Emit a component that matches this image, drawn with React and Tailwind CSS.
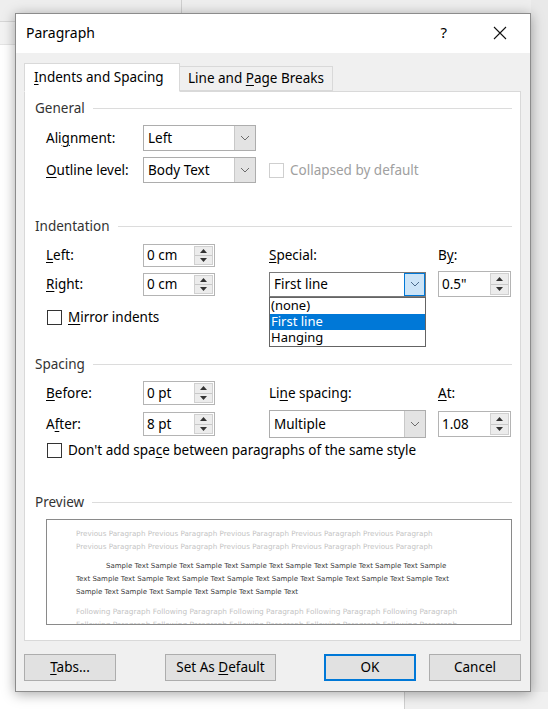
import React from 'react';

const font = { fontFamily: '"Noto Sans", "Open Sans", sans-serif' };

const U = ({ children }) => <span className="underline underline-offset-2 decoration-1">{children}</span>;

const Chevron = ({ color = '#6b6b6b' }) => (
    <svg width="10" height="6" viewBox="0 0 10 6">
        <polyline points="1,1 5,5 9,1" fill="none" stroke={color} strokeWidth="1" />
    </svg>
);

const Heading = ({ children }) => (
    <div className="flex items-center h-[18px] text-[13.5px] text-[#333]">
        <span>{children}</span>
        <div className="flex-1 h-px bg-[#dcdcdc] ml-2 mr-[8px]" />
    </div>
);

const Select = ({ value, width = 'w-[113px]', height = 'h-[26px]', active = false }) => (
    <div className={`flex ${width} ${height} bg-white border ${active ? 'border-[#7a7a7a]' : 'border-[#adadad]'}`}>
        <div className="flex-1 flex items-center pl-[4px] text-black">{value}</div>
        {active ? (
            <div className="w-[21px] flex items-center justify-center bg-[#cce4f7] border border-[#0078d7]">
                <Chevron color="#4a6a8a" />
            </div>
        ) : (
            <div className="w-[21px] flex items-center justify-center bg-[#e3e3e3] border-l border-[#c8c8c8]">
                <Chevron />
            </div>
        )}
    </div>
);

const Spinner = ({ value, width = 'w-[72px]', height = 'h-[24px]' }) => (
    <div className={`flex ${width} ${height} bg-white border border-[#b4b4b4]`}>
        <div className="flex-1 flex items-center pl-[3px] text-black">{value}</div>
        <div className="w-[19px] flex flex-col my-[1px] mr-[1px] bg-[#ececec] border border-[#d0d0d0]">
            <div className="flex-1 flex items-center justify-center border-b border-[#c8c8c8]">
                <svg width="7" height="4" viewBox="0 0 7 4"><polygon points="0,4 3.5,0 7,4" fill="#333" /></svg>
            </div>
            <div className="flex-1 flex items-center justify-center">
                <svg width="7" height="4" viewBox="0 0 7 4"><polygon points="0,0 3.5,4 7,0" fill="#333" /></svg>
            </div>
        </div>
    </div>
);

const Checkbox = ({ disabled = false }) => (
    <div className={`w-[15px] h-[15px] bg-white border ${disabled ? 'border-[#cfcfcf]' : 'border-[#333]'}`} />
);

const Button = ({ children, primary = false, width = 'w-[92px]' }) => (
    <div className={`${width} h-[27px] flex items-center justify-center text-[13.5px] text-black bg-[#e1e1e1] ${primary ? 'border-2 border-[#0078d7]' : 'border border-[#adadad]'}`}>
        {children}
    </div>
);

const prev = 'Previous Paragraph Previous Paragraph Previous Paragraph Previous Paragraph Previous Paragraph';
const follow = 'Following Paragraph Following Paragraph Following Paragraph Following Paragraph Following Paragraph';

const App = () => {
    return (
        <div className="relative w-[548px] h-[709px] bg-white overflow-hidden" style={font}>
            {/* background window behind dialog */}
            <div className="absolute left-0 top-0 w-full h-[22px] bg-[#eeeeee] border-b border-[#d6d6d6]" />
            <div className="absolute left-[181px] top-0 w-px h-[22px] bg-[#cfcfcf]" />
            <div className="absolute left-0 top-[22px] w-full h-[23px] bg-[#f3f3f3] border-b border-[#e4e4e4]" />
            <div className="absolute left-[531px] top-0 w-[17px] h-full bg-[#e9e9e9]" />
            <div className="absolute left-[404px] top-[692px] w-[144px] h-[17px] bg-[#f0f0f0] border-l border-[#d0d0d0]" />

            {/* dialog */}
            <div className="relative z-10 ml-[15px] mt-[13px] w-[516px] h-[679px] bg-[#f0f0f0] border border-[#8c8c8c] shadow-[0_2px_12px_rgba(0,0,0,0.35)] flex flex-col">
                {/* title bar */}
                <div className="h-[39px] bg-white flex items-center pl-[10px] pb-[2px] text-black">
                    <span className="text-[14px]">Paragraph</span>
                    <span className="ml-auto text-[15px] mr-[46px]">?</span>
                    <svg width="14" height="14" viewBox="0 0 14 14" className="mr-[23px]">
                        <path d="M1 1 L13 13 M13 1 L1 13" stroke="#111" strokeWidth="1.1" />
                    </svg>
                </div>

                <div className="px-[8px] pt-[10px] flex flex-col">
                    {/* tabs */}
                    <div className="flex items-end h-[28px] text-[13.5px] text-black">
                        <div className="relative z-10 w-[156px] h-[29px] -mb-px bg-white border border-[#d9d9d9] border-b-white flex items-center pl-[9px]">
                            <span><U>I</U>ndents and Spacing</span>
                        </div>
                        <div className="w-[153px] h-[25px] bg-[#f0f0f0] border border-l-0 border-[#d9d9d9] flex items-center pl-[8px]">
                            <span>Line and <U>P</U>age Breaks</span>
                        </div>
                    </div>

                    {/* panel */}
                    <div className="w-[497px] h-[550px] bg-white border border-[#d9d9d9] pl-[10px] pt-[7px] flex flex-col text-[13.5px] text-black">
                        <Heading>General</Heading>
                        <div className="ml-[11px] mt-[8px] flex items-center h-[26px]">
                            <div className="w-[97px]">Ali<U>g</U>nment:</div>
                            <Select value="Left" />
                        </div>
                        <div className="ml-[11px] mt-[6px] flex items-center h-[26px]">
                            <div className="w-[97px]"><U>O</U>utline level:</div>
                            <Select value="Body Text" />
                            <div className="ml-[13px]"><Checkbox disabled /></div>
                            <span className="ml-[6px] text-[#a0a0a0]">Collapsed by default</span>
                        </div>

                        <div className="mt-[34px]"><Heading>Indentation</Heading></div>
                        <div className="ml-[11px] mt-[8px] flex items-center h-[24px]">
                            <div className="w-[97px]"><U>L</U>eft:</div>
                            <Spinner value="0 cm" height="h-[23px]" />
                            <div className="ml-[54px] w-[157px]"><U>S</U>pecial:</div>
                            <div className="ml-[12px]">B<U>y</U>:</div>
                        </div>
                        <div className="ml-[11px] mt-[4px] flex items-center h-[26px]">
                            <div className="w-[97px]"><U>R</U>ight:</div>
                            <Spinner value="0 cm" height="h-[23px]" />
                            <div className="relative ml-[54px]">
                                <Select value="First line" width="w-[157px]" height="h-[25px]" active />
                                <div className="absolute left-0 top-full w-[157px] bg-white border border-[#646464] z-20 flex flex-col text-[13px]">
                                    <div className="h-[16px] leading-[15px] pl-[1px]">(none)</div>
                                    <div className="h-[16px] leading-[15px] pl-[1px] bg-[#0078d7] text-white">First line</div>
                                    <div className="h-[16px] leading-[15px] pl-[1px]">Hanging</div>
                                </div>
                            </div>
                            <div className="ml-[12px]"><Spinner value="0.5&quot;" width="w-[73px]" height="h-[26px]" /></div>
                        </div>
                        <div className="ml-[12px] mt-[11px] flex items-center h-[18px]">
                            <Checkbox />
                            <span className="ml-[6px]"><U>M</U>irror indents</span>
                        </div>

                        <div className="mt-[29px]"><Heading>Spacing</Heading></div>
                        <div className="ml-[11px] mt-[8px] flex items-center h-[24px]">
                            <div className="w-[97px]"><U>B</U>efore:</div>
                            <Spinner value="0 pt" />
                            <div className="ml-[54px] w-[157px]">Li<U>n</U>e spacing:</div>
                            <div className="ml-[12px]"><U>A</U>t:</div>
                        </div>
                        <div className="ml-[11px] mt-[5px] flex items-center h-[28px]">
                            <div className="w-[97px]">A<U>f</U>ter:</div>
                            <Spinner value="8 pt" />
                            <div className="ml-[54px]"><Select value="Multiple" width="w-[157px]" height="h-[28px]" /></div>
                            <div className="ml-[12px]"><Spinner value="1.08" width="w-[73px]" height="h-[26px]" /></div>
                        </div>
                        <div className="ml-[12px] mt-[3px] flex items-center h-[18px]">
                            <Checkbox />
                            <span className="ml-[6px]">Don't add spa<U>c</U>e between paragraphs of the same style</span>
                        </div>

                        <div className="mt-[34px]"><Heading>Preview</Heading></div>
                        <div className="ml-[11px] mt-[8px] w-[466px] h-[106px] bg-white border border-[#8a8a8a] overflow-hidden pl-[29px] pt-[7px] leading-[13px] whitespace-nowrap" style={{ fontFamily: '"DejaVu Sans", sans-serif' }}>
                            <div className="text-[7.2px] text-[#c4c4c4]">{prev}</div>
                            <div className="text-[7.2px] text-[#c4c4c4]">{prev}</div>
                            <div className="mt-[7px] text-[7px] text-[#3a3a3a] pl-[30px]">Sample Text Sample Text Sample Text Sample Text Sample Text Sample Text Sample Text Sample</div>
                            <div className="text-[7px] text-[#3a3a3a]">Text Sample Text Sample Text Sample Text Sample Text Sample Text Sample Text Sample Text Sample Text</div>
                            <div className="text-[7px] text-[#3a3a3a]">Sample Text Sample Text Sample Text Sample Text Sample Text</div>
                            <div className="mt-[6px] text-[7.35px] text-[#c4c4c4]">{follow}</div>
                            <div className="text-[7.35px] text-[#c4c4c4]">{follow}</div>
                        </div>
                    </div>

                    {/* buttons */}
                    <div className="flex items-center mt-[13px]">
                        <Button><span><U>T</U>abs...</span></Button>
                        <div className="ml-[49px]"><Button width="w-[111px]"><span>Set As <U>D</U>efault</span></Button></div>
                        <div className="ml-[48px]"><Button primary>OK</Button></div>
                        <div className="ml-[13px]"><Button>Cancel</Button></div>
                    </div>
                </div>
            </div>
        </div>
    );
};

export default App;
